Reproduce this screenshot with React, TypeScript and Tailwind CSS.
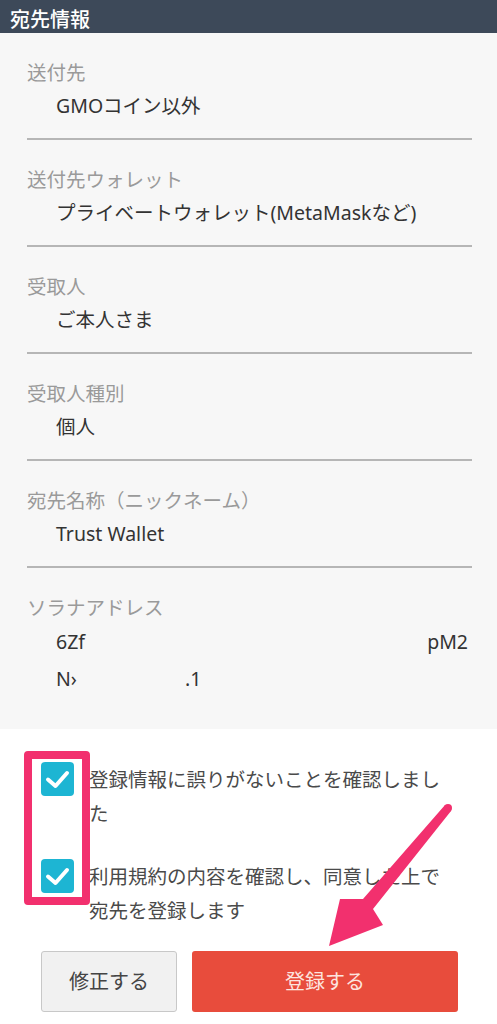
const rows = [
  { label: "送付先", value: "GMOコイン以外" },
  { label: "送付先ウォレット", value: "プライベートウォレット(MetaMaskなど)" },
  { label: "受取人", value: "ご本人さま" },
  { label: "受取人種別", value: "個人" },
  { label: "宛先名称（ニックネーム）", value: "Trust Wallet" },
];

const Check = () => (
  <div className="w-[33px] h-[34px] shrink-0 rounded-[4px] bg-[#1db5d3] flex items-center justify-center">
    <svg width="33" height="34" viewBox="0 0 33 34">
      <path d="M7 17.5 L14.5 24 L26 11" fill="none" stroke="#fff" strokeWidth="4" strokeLinecap="round" strokeLinejoin="round" />
    </svg>
  </div>
);

const App = () => {
  return (
    <div className="relative w-full min-h-[1024px] bg-white font-['Noto_Sans','Noto_Sans_CJK_JP',sans-serif] text-[19.5px]">
      {/* Header */}
      <div className="h-[33px] bg-[#3d4959] pl-[10px] pt-[6px]">
        <h1 className="leading-[28px] text-[20px] font-medium text-white">宛先情報</h1>
      </div>

      {/* Details */}
      <div className="bg-[#f7f7f7] pl-[27px] pr-[25px] pb-[32px]">
        {rows.map((r) => (
          <div key={r.label} className="pt-[25px]">
            <p className="leading-[30px] text-[#9a9a9a]">{r.label}</p>
            <p className="leading-[36px] pl-[29px] text-[#333]">{r.value}</p>
            <div className="mt-[14px] h-[2px] bg-[#b6b6b6]" />
          </div>
        ))}
        <div className="pt-[25px]">
          <p className="leading-[30px] text-[#9a9a9a]">ソラナアドレス</p>
          <div className="pl-[29px] pr-[4px] text-[#333] leading-[37px]">
            <div className="flex justify-between">
              <span>6Zf</span>
              <span>pM2</span>
            </div>
            <div className="flex">
              <span className="w-[129px]">N›</span>
              <span>.1</span>
            </div>
          </div>
        </div>
      </div>

      {/* Confirmations */}
      <div className="relative pt-[33px] pl-[41px]">
        <div className="flex gap-[15px]">
          <Check />
          <p className="w-[362px] pt-[1px] leading-[34px] text-[#4a4a4a]">登録情報に誤りがないことを確認しました</p>
        </div>
        <div className="mt-[28px] flex gap-[15px]">
          <Check />
          <p className="w-[362px] pt-[1px] leading-[34px] text-[#4a4a4a]">利用規約の内容を確認し、同意した上で宛先を登録します</p>
        </div>

        <div className="mt-[23px] flex gap-[15px]">
          <button className="w-[136px] h-[61px] rounded-[3px] border border-[#c8c8c8] bg-[#f1f1f1] text-[20px] text-[#444]">
            修正する
          </button>
          <button className="w-[266px] h-[61px] rounded-[3px] bg-[#e84c3c] text-[20px] text-[#fde4df]">
            登録する
          </button>
        </div>

        {/* annotation box */}
        <div className="absolute left-[24px] top-[22px] w-[66px] h-[154px] rounded-[4px] border-[8px] border-[#f2306e]" />
      </div>

      {/* annotation arrow */}
      <svg className="absolute left-0 top-0 pointer-events-none" width="497" height="1024" viewBox="0 0 497 1024">
        <polygon
          points="445,805 363,899 340,899 329,946 383,925 373,909 451,811"
          fill="#f2306e"
        />
        <circle cx="448" cy="808" r="4" fill="#f2306e" />
      </svg>
    </div>
  );
};

export default App;
